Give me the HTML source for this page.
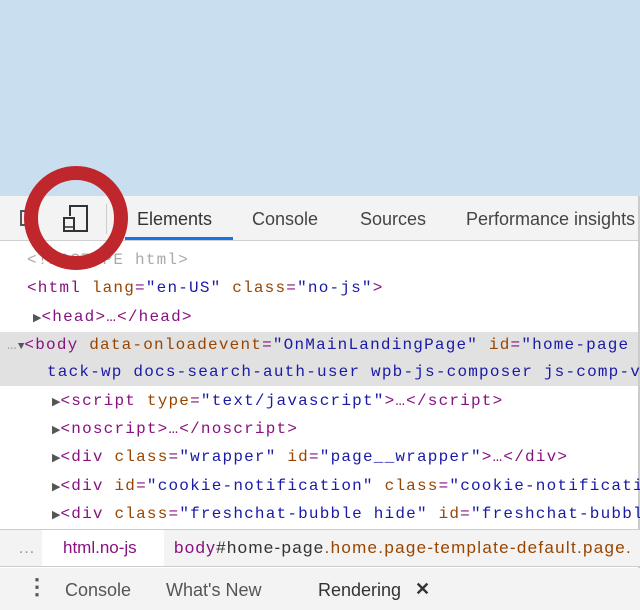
<!DOCTYPE html>
<html><head><meta charset="utf-8"><style>
*{margin:0;padding:0;box-sizing:border-box}
body{width:640px;height:610px;overflow:hidden;background:#fff;position:relative;font-family:"Liberation Sans",sans-serif}
.top{position:absolute;left:0;top:0;width:640px;height:196px;background:#c9dff0}
.tb{position:absolute;left:0;top:196px;width:640px;height:45px;background:#f3f3f3;border-bottom:1px solid #d0d0d0}
.tab{position:absolute;top:209px;font-size:18px;color:#444}
.code{position:absolute;left:0;top:244px;width:640px;font-family:"Liberation Mono",monospace;font-size:16px;letter-spacing:1.2px;white-space:pre}
.l{position:absolute;height:28px;line-height:28px}
.t{color:#881280}.a{color:#994500}.v{color:#1a1aa6}.g{color:#aaa}
.tri{color:#555;font-size:11px;letter-spacing:0}
.sel{position:absolute;left:0;top:332px;width:638px;height:54px;background:#e1e1e1}
.bc{position:absolute;left:0;top:529px;width:640px;height:38px;background:#f3f3f3;border-top:1px solid #ccc;border-bottom:1px solid #ccc;font-size:17px}
.dr{position:absolute;left:0;top:568px;width:640px;height:42px;background:#f3f3f3;font-size:18px;color:#555}
</style></head><body>
<div class="top"></div>
<div class="tb"></div>
<div style="position:absolute;left:20px;top:210px;width:12px;height:16px;border:2px solid #555"></div>
<svg style="position:absolute;left:60px;top:203px" width="32" height="32"><path d="M10 13V3h17v25h-13" fill="none" stroke="#333" stroke-width="2"/><rect x="4" y="15" width="10" height="13" fill="none" stroke="#333" stroke-width="2"/><path d="M4 24h10" stroke="#333" stroke-width="1.5"/></svg>
<div style="position:absolute;left:106px;top:204px;width:1px;height:30px;background:#ccc"></div>
<div class="tab" style="left:137px;color:#333">Elements</div>
<div style="position:absolute;left:125px;top:237px;width:108px;height:3px;background:#1a73e8"></div>
<div class="tab" style="left:252px">Console</div>
<div class="tab" style="left:360px">Sources</div>
<div class="tab" style="left:466px;white-space:nowrap">Performance insights</div>
<div style="position:absolute;left:638px;top:196px;width:2px;height:414px;background:#ccc"></div>
<div class="sel"></div>
<div class="code">
<div class="l g" style="left:27px;top:2px">&lt;!DOCTYPE html&gt;</div>
<div class="l" style="left:27px;top:30px"><span class="t">&lt;html </span><span class="a">lang</span><span class="t">=</span><span class="v">"en-US"</span> <span class="a">class</span><span class="t">=</span><span class="v">"no-js"</span><span class="t">&gt;</span></div>
<div class="l" style="left:33px;top:59px"><span class="tri">▶</span><span class="t">&lt;head&gt;…&lt;/head&gt;</span></div>
<div class="l" style="left:7px;top:87px"><span class="g">…</span><span class="tri">▼</span><span class="t">&lt;body </span><span class="a">data-onloadevent</span><span class="t">=</span><span class="v">"OnMainLandingPage"</span> <span class="a">id</span><span class="t">=</span><span class="v">"home-page</span></div>
<div class="l v" style="left:47px;top:114px">tack-wp docs-search-auth-user wpb-js-composer js-comp-ver</div>
<div class="l" style="left:52px;top:143px"><span class="tri">▶</span><span class="t">&lt;script </span><span class="a">type</span><span class="t">=</span><span class="v">"text/javascript"</span><span class="t">&gt;…&lt;/script&gt;</span></div>
<div class="l" style="left:52px;top:171px"><span class="tri">▶</span><span class="t">&lt;noscript&gt;…&lt;/noscript&gt;</span></div>
<div class="l" style="left:52px;top:199px"><span class="tri">▶</span><span class="t">&lt;div </span><span class="a">class</span><span class="t">=</span><span class="v">"wrapper"</span> <span class="a">id</span><span class="t">=</span><span class="v">"page__wrapper"</span><span class="t">&gt;…&lt;/div&gt;</span></div>
<div class="l" style="left:52px;top:228px"><span class="tri">▶</span><span class="t">&lt;div </span><span class="a">id</span><span class="t">=</span><span class="v">"cookie-notification"</span> <span class="a">class</span><span class="t">=</span><span class="v">"cookie-notification</span></div>
<div class="l" style="left:52px;top:256px"><span class="tri">▶</span><span class="t">&lt;div </span><span class="a">class</span><span class="t">=</span><span class="v">"freshchat-bubble hide"</span> <span class="a">id</span><span class="t">=</span><span class="v">"freshchat-bubble</span></div>
</div>
<div class="bc">
<span style="position:absolute;left:18px;top:8px;color:#999">…</span>
<div style="position:absolute;left:42px;top:0;width:122px;height:36px;background:#fff"></div>
<span style="position:absolute;left:63px;top:8px;color:#881280">html.no-js</span>
<span style="position:absolute;left:174px;top:8px;white-space:nowrap;letter-spacing:1.3px"><span style="color:#881280">body</span><span style="color:#333">#home-page</span><span style="color:#994500">.home.page-template-default.page.</span></span>
</div>
<div class="dr">
<span style="position:absolute;left:26px;top:8px;font-size:22px;line-height:22px;color:#555;font-weight:bold">⋮</span>
<span style="position:absolute;left:65px;top:12px">Console</span>
<span style="position:absolute;left:166px;top:12px">What's New</span>
<span style="position:absolute;left:318px;top:12px;color:#333">Rendering</span>
<span style="position:absolute;left:415px;top:11px;color:#333;font-weight:bold">✕</span>
</div>
<div style="position:absolute;left:24px;top:166px;width:104px;height:104px;border-radius:50%;border:14px solid #c0272d"></div>
</body></html>
